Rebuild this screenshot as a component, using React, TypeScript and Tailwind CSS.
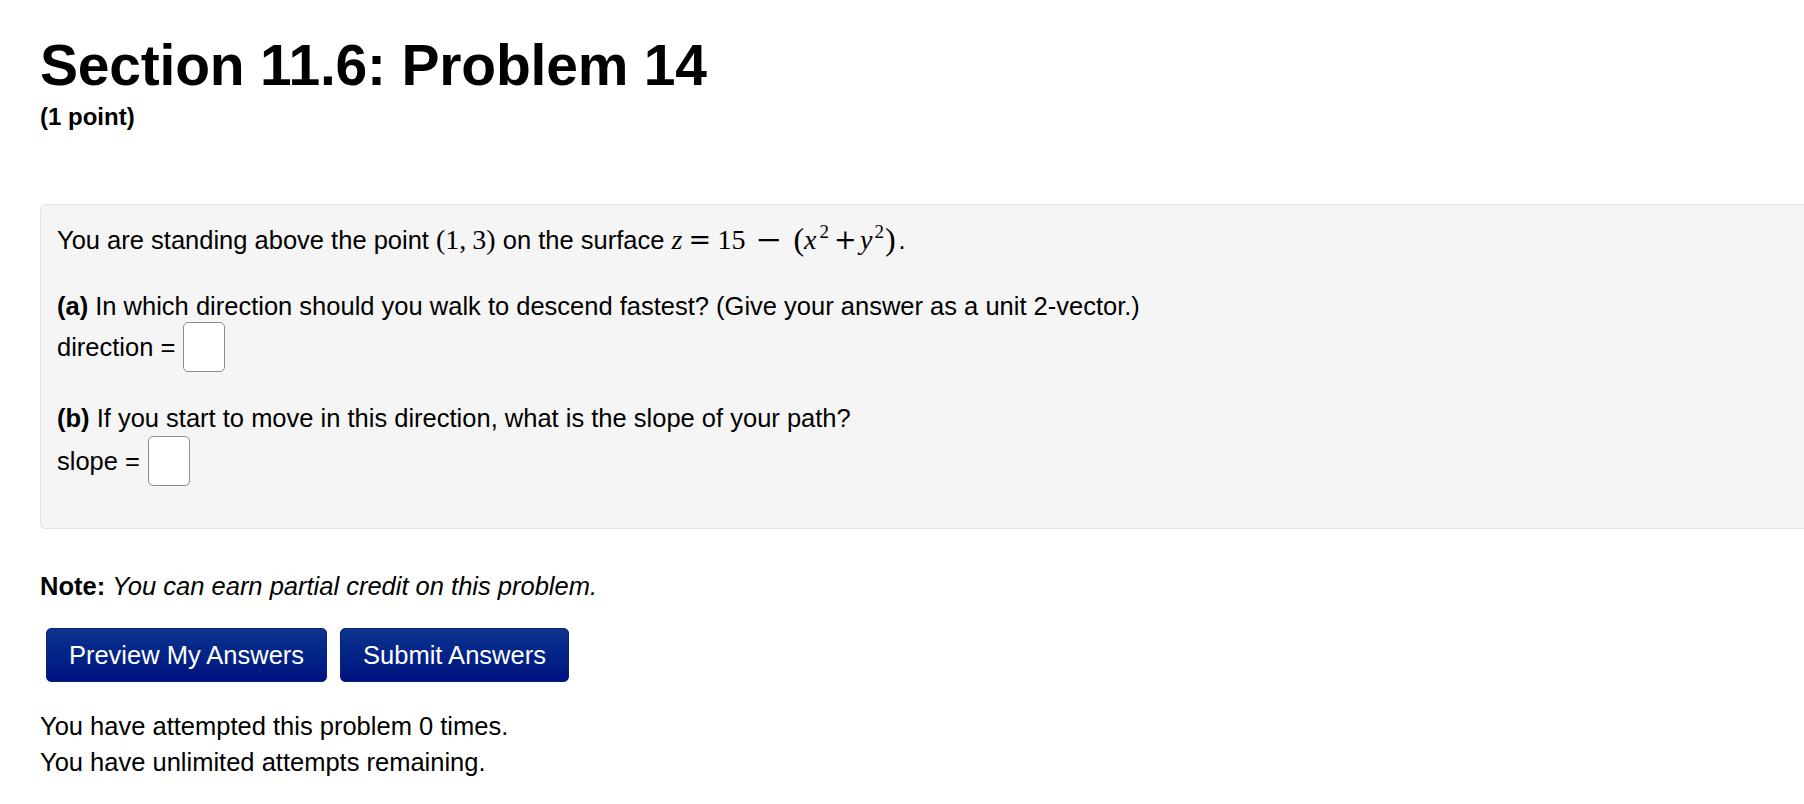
import React from 'react';

const sans = "font-['Liberation_Sans','Helvetica','Arial',sans-serif]";
const serif = "font-['Liberation_Serif','DejaVu_Serif',serif]";
const opFont = "font-['DejaVu_Serif','Liberation_Serif',serif]";

// Wide TeX-style operator (=, +, −)
const Op: React.FC<{ children: React.ReactNode; className?: string }> = ({ children, className }) => (
  <span className={`${opFont} inline-block w-[22px] text-center ${className ?? ''}`}>{children}</span>
);

const Sup: React.FC<{ className?: string }> = ({ className }) => (
  <sup className={`text-[19px] relative -top-[11px] ${className ?? ''}`}>2</sup>
);

const AnswerBox: React.FC<{ label: string }> = ({ label }) => (
  <input
    type="text"
    aria-label={label}
    className="ml-[8px] w-[42px] h-[50px] bg-white border border-[#8c8c8c] rounded-[5px] outline-none"
  />
);

const App: React.FC = () => {
  return (
    <div className={`${sans} w-screen min-h-screen overflow-hidden bg-white text-black`}>
      <div className="pl-[40px] pt-[37px]">
        {/* Header */}
        <h1 className="text-[57px] leading-[56px] font-bold tracking-[-0.2px]">Section 11.6: Problem 14</h1>
        <div className="mt-[9px] text-[24px] leading-[30px] font-bold">(1 point)</div>

        {/* Problem body */}
        <div className="mt-[72px] w-[1800px] bg-[#f5f5f5] border border-[#e3e3e3] rounded-[5px] pl-[16px] pt-[17px] pb-[42px] text-[25.5px] leading-[36px]">
          <div className="h-[36px] flex items-baseline whitespace-nowrap">
            <span>You are standing above the point&nbsp;</span>
            <span className={`${serif} text-[28px] leading-none`}>
              (1,<span className="ml-[6px]">3</span>)
            </span>
            <span>&nbsp;on the surface&nbsp;</span>
            <span className={`${serif} text-[28px] leading-none`}>
              <i>z</i>
              <Op className="ml-[6px] text-[27px]">=</Op>
              <span className="ml-[7px]">15</span>
              <Op className="ml-[12px] w-[22px] text-[28px] scale-x-[1.15]">−</Op>
              <span className="inline-block ml-[14px] text-[32px] translate-y-[1px]">(</span>
              <i>x</i>
              <Sup className="ml-[3px]" />
              <Op className="ml-[5px] text-[27px]">+</Op>
              <i className="ml-[4px]">y</i>
              <Sup className="ml-[2px]" />
              <span className="inline-block ml-[1px] text-[32px] translate-y-[1px]">)</span>
            </span>
            <span className="ml-[3px]">.</span>
          </div>

          <div className="mt-[30px] h-[36px]">
            <b>(a)</b> In which direction should you walk to descend fastest? (Give your answer as a unit 2-vector.)
          </div>
          <div className="-mt-[2px] h-[50px] flex items-center">
            <span>direction =</span>
            <AnswerBox label="direction" />
          </div>

          <div className="mt-[28px] h-[36px]">
            <b>(b)</b> If you start to move in this direction, what is the slope of your path?
          </div>
          <div className="h-[50px] flex items-center">
            <span>slope =</span>
            <AnswerBox label="slope" />
          </div>
        </div>

        {/* Footer */}
        <div className="mt-[39px] text-[25.5px] leading-[36px]">
          <b>Note:</b> <i>You can earn partial credit on this problem.</i>
        </div>

        <div className="mt-[24px] ml-[6px] flex gap-[13px]">
          <button className="w-[281px] h-[54px] rounded-[5px] bg-gradient-to-b from-[#0e338f] to-[#00107f] text-white text-[25.5px] border border-[#0a2470]">
            Preview My Answers
          </button>
          <button className="w-[229px] h-[54px] rounded-[5px] bg-gradient-to-b from-[#0e338f] to-[#00107f] text-white text-[25.5px] border border-[#0a2470]">
            Submit Answers
          </button>
        </div>

        <div className="mt-[26px] text-[25.5px] leading-[36px]">
          <div>You have attempted this problem 0 times.</div>
          <div>You have unlimited attempts remaining.</div>
        </div>
      </div>
    </div>
  );
};

export default App;
